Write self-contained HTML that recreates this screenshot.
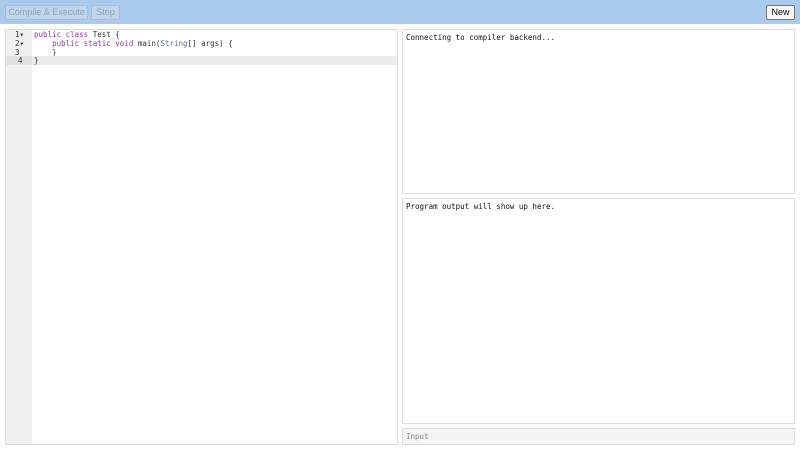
<!DOCTYPE html>
<html><head><style>
*{box-sizing:border-box;margin:0;padding:0}
body{width:800px;height:450px;background:#fff;font-family:"Liberation Sans",sans-serif;position:relative;overflow:hidden}
.bar{position:absolute;left:0;top:0;width:800px;height:24px;background:#aacbee}
.btn{position:absolute;top:5px;height:15px;font-size:9px;line-height:13px;text-align:center;border:1px solid #bbb;border-radius:2px}
.dis{background:#c0d5ec;color:#8ea4ba;border-color:#a6bdd4}
.new{background:#f7f7f7;color:#111;border-color:#777}
.ed{position:absolute;left:5px;top:29px;width:393px;height:416px;border:1px solid #ddd;background:#fff}
.gut{position:absolute;left:0;top:0;width:26px;height:100%;background:#f0f0f0}
.line{position:absolute;left:0;width:391px;height:9px;font-family:"DejaVu Sans Mono","Liberation Mono",monospace;font-size:7.5px;line-height:9px;white-space:pre;color:#333}
.ln{position:absolute;left:0;width:18px;text-align:right;color:#333}
.code{position:absolute;left:28px}
.k{color:#93a}.t{color:#47a}
.box{position:absolute;left:402px;width:393px;border:1px solid #ddd;background:#fff;font-family:"DejaVu Sans Mono","Liberation Mono",monospace;font-size:7.5px;padding:3px 3px;color:#111}
</style></head><body>
<div class="bar"></div>
<div class="btn dis" style="left:5px;width:83px">Compile &amp; Execute</div>
<div class="btn dis" style="left:91px;width:29px">Stop</div>
<div class="btn new" style="left:766px;width:29px">New</div>
<div class="ed"><div class="gut"></div>
<div class="line" style="top:0"><span class="ln">1▾</span><span class="code"><span class="k">public class</span> Test {</span></div>
<div class="line" style="top:9px"><span class="ln">2▾</span><span class="code">    <span class="k">public static void</span> main(<span class="t">String</span>[] args) {</span></div>
<div class="line" style="top:18px"><span class="ln">3 </span><span class="code">    }</span></div>
<div class="line" style="top:26px;background:#ececec"><span class="ln" style="background:#e2e2e2;width:26px;text-align:left;padding-left:12px">4</span><span class="code">}</span></div>
</div>
<div class="box" style="top:29px;height:165px">Connecting to compiler backend...</div>
<div class="box" style="top:198px;height:226px">Program output will show up here.</div>
<div class="box" style="top:428px;height:17px;background:#f5f5f5;color:#888;padding-top:3px">Input</div>
</body></html>
